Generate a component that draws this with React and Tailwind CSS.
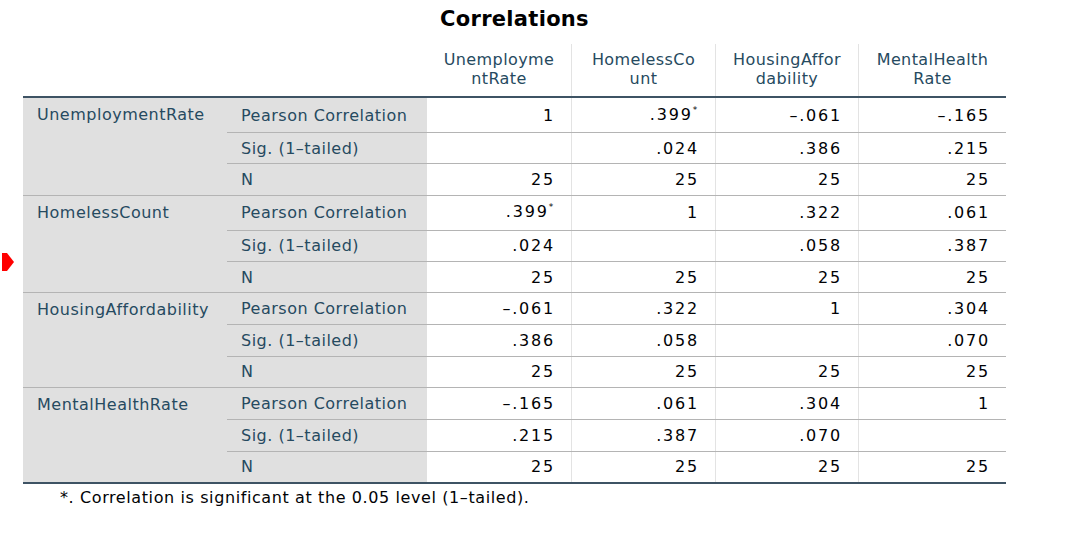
import React from "react";

const colW = ["w-[144px]", "w-[144px]", "w-[143px]", "w-[148px]"];
const headers = [
  ["Unemployme", "ntRate"],
  ["HomelessCo", "unt"],
  ["HousingAffor", "dability"],
  ["MentalHealth", "Rate"],
];
const stats = ["Pearson Correlation", "Sig. (1–tailed)", "N"];
const groups = [
  {
    name: "UnemploymentRate",
    rows: [
      ["1", ".399*", "–.061", "–.165"],
      ["", ".024", ".386", ".215"],
      ["25", "25", "25", "25"],
    ],
  },
  {
    name: "HomelessCount",
    rows: [
      [".399*", "1", ".322", ".061"],
      [".024", "", ".058", ".387"],
      ["25", "25", "25", "25"],
    ],
  },
  {
    name: "HousingAffordability",
    rows: [
      ["–.061", ".322", "1", ".304"],
      [".386", ".058", "", ".070"],
      ["25", "25", "25", "25"],
    ],
  },
  {
    name: "MentalHealthRate",
    rows: [
      ["–.165", ".061", ".304", "1"],
      [".215", ".387", ".070", ""],
      ["25", "25", "25", "25"],
    ],
  },
];

function Val({ v }) {
  if (v.endsWith("*")) {
    return (
      <span>
        {v.slice(0, -1)}
        <span className="relative top-[-7px] text-[9px]">*</span>
      </span>
    );
  }
  return <span>{v}</span>;
}

export default function App() {
  return (
    <div
      className="w-[1077px] h-[546px] bg-white relative overflow-hidden"
      style={{ fontFamily: '"DejaVu Sans", "Liberation Sans", sans-serif' }}
    >
      <svg className="absolute left-[2px] top-[252px]" width="14" height="20" viewBox="0 0 14 20">
        <polygon points="0,1 5,1 12,10 5,19 0,19" fill="#ff0000" />
      </svg>
      <div className="pl-[23px]">
        <div className="w-[983px]">
          <div className="h-[40px] flex items-center justify-center text-[21px] font-bold text-black tracking-[0.3px]">
            Correlations
          </div>
          <div className="flex h-[52px] mt-[4px]">
            <div className="w-[404px]" />
            {headers.map((h, i) => (
              <div
                key={i}
                className={`${colW[i]} ${i > 0 ? "border-l border-[#e3e3e3]" : ""} flex flex-col items-center justify-end pb-[8px] text-[16px] leading-[19px] tracking-[0.4px] text-[#264a60]`}
              >
                <span>{h[0]}</span>
                <span>{h[1]}</span>
              </div>
            ))}
          </div>
          <div className="h-[2px] bg-[#3e5364]" />
          {groups.map((g, gi) => (
            <div key={gi} className={`flex ${gi > 0 ? "border-t border-[#b4b4b4]" : ""}`}>
              <div className="w-[204px] bg-[#e0e0e0] pl-[14px] pt-[7px] text-[16px] leading-[20px] tracking-[0.5px] text-[#264a60]">
                {g.name}
              </div>
              <div className="flex flex-col">
                {g.rows.map((r, ri) => {
                  const tall = r.some((v) => v.endsWith("*"));
                  return (
                    <div
                      key={ri}
                      className={`flex ${tall ? "h-[34px]" : "h-[31.3px]"} ${ri > 0 ? "border-t border-[#b4b4b4]" : ""}`}
                    >
                      <div className="w-[200px] bg-[#e0e0e0] pl-[14px] flex items-center pt-[1px] text-[16px] leading-[20px] tracking-[0.5px] text-[#264a60]">
                        {stats[ri]}
                      </div>
                      {r.map((v, ci) => (
                        <div
                          key={ci}
                          className={`${colW[ci]} ${ci > 0 ? "border-l border-[#e3e3e3]" : ""} flex items-center pt-[1px] justify-end pr-[16px] text-[16px] leading-[20px] tracking-[1.8px] text-[#010205]`}
                        >
                          <Val v={v} />
                        </div>
                      ))}
                    </div>
                  );
                })}
              </div>
            </div>
          ))}
          <div className="h-[2px] bg-[#3e5364]" />
          <div className="pl-[37px] pt-[4px] text-[16px] leading-[20px] tracking-[0.6px] text-[#010205]">
            *. Correlation is significant at the 0.05 level (1–tailed).
          </div>
        </div>
      </div>
    </div>
  );
}
